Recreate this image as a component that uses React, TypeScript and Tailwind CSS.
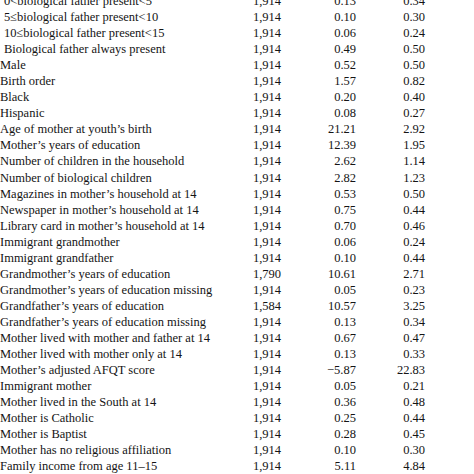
const rows: [string, string, string, string, boolean?][] = [
  ["0<biological father present<5", "1,914", "0.13", "0.34", true],
  ["5≤biological father present<10", "1,914", "0.10", "0.30", true],
  ["10≤biological father present<15", "1,914", "0.06", "0.24", true],
  ["Biological father always present", "1,914", "0.49", "0.50", true],
  ["Male", "1,914", "0.52", "0.50"],
  ["Birth order", "1,914", "1.57", "0.82"],
  ["Black", "1,914", "0.20", "0.40"],
  ["Hispanic", "1,914", "0.08", "0.27"],
  ["Age of mother at youth’s birth", "1,914", "21.21", "2.92"],
  ["Mother’s years of education", "1,914", "12.39", "1.95"],
  ["Number of children in the household", "1,914", "2.62", "1.14"],
  ["Number of biological children", "1,914", "2.82", "1.23"],
  ["Magazines in mother’s household at 14", "1,914", "0.53", "0.50"],
  ["Newspaper in mother’s household at 14", "1,914", "0.75", "0.44"],
  ["Library card in mother’s household at 14", "1,914", "0.70", "0.46"],
  ["Immigrant grandmother", "1,914", "0.06", "0.24"],
  ["Immigrant grandfather", "1,914", "0.10", "0.44"],
  ["Grandmother’s years of education", "1,790", "10.61", "2.71"],
  ["Grandmother’s years of education missing", "1,914", "0.05", "0.23"],
  ["Grandfather’s years of education", "1,584", "10.57", "3.25"],
  ["Grandfather’s years of education missing", "1,914", "0.13", "0.34"],
  ["Mother lived with mother and father at 14", "1,914", "0.67", "0.47"],
  ["Mother lived with mother only at 14", "1,914", "0.13", "0.33"],
  ["Mother’s adjusted AFQT score", "1,914", "−5.87", "22.83"],
  ["Immigrant mother", "1,914", "0.05", "0.21"],
  ["Mother lived in the South at 14", "1,914", "0.36", "0.48"],
  ["Mother is Catholic", "1,914", "0.25", "0.44"],
  ["Mother is Baptist", "1,914", "0.28", "0.45"],
  ["Mother has no religious affiliation", "1,914", "0.10", "0.30"],
  ["Family income from age 11–15", "1,914", "5.11", "4.84"],
];

export default function App() {
  return (
    <div className="h-[474px] w-[474px] overflow-hidden bg-white text-[#141414] font-['Liberation_Serif',serif] text-[12.5px] leading-[16.05px]">
      <div className="-mt-[7px]">
        {rows.map(([label, n, mean, sd, sub], i) => (
          <div key={i} className="flex">
            <div className={`w-[240px] whitespace-nowrap ${sub ? "pl-[4px]" : ""}`}>{label}</div>
            <div className="w-[41px] text-right">{n}</div>
            <div className="w-[75px] text-right">{mean}</div>
            <div className="w-[69px] text-right">{sd}</div>
          </div>
        ))}
      </div>
    </div>
  );
}
